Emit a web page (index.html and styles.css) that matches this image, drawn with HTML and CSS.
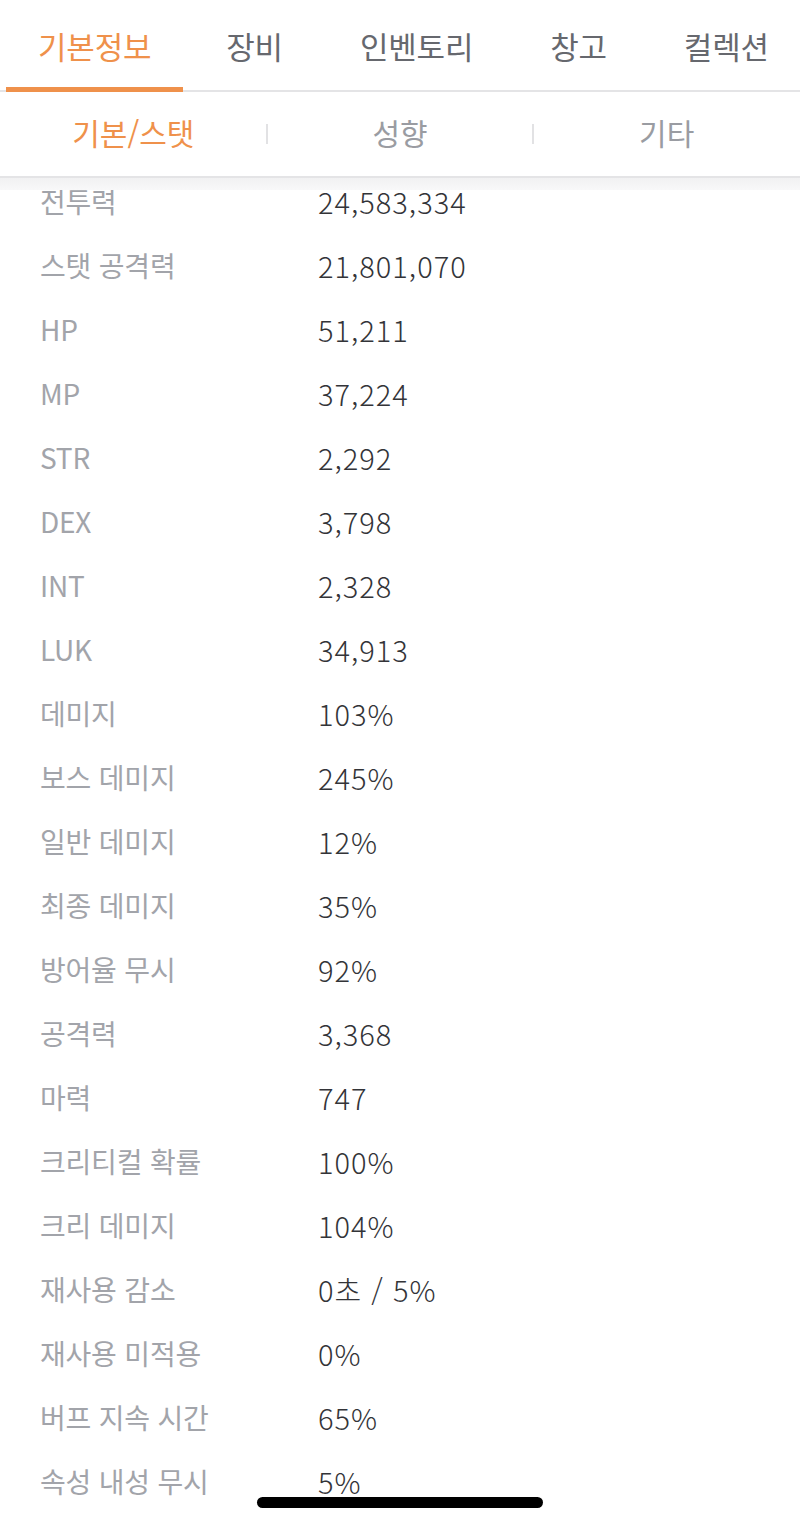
FILE: index.html
```html
<!DOCTYPE html>
<html lang="ko">
<head>
<meta charset="utf-8">
<link rel="stylesheet" href="styles.css">
</head>
<body>
<div class="screen">
  <header class="header">
    <nav class="tabs">
      <div class="tab active">기본정보</div>
      <div class="tab">장비</div>
      <div class="tab">인벤토리</div>
      <div class="tab">창고</div>
      <div class="tab">컬렉션</div>
    </nav>
    <nav class="subtabs">
      <div class="subtab active">기본/스탯</div>
      <div class="subtab">성향</div>
      <div class="subtab">기타</div>
    </nav>
  </header>
  <main class="list">
    <div class="row"><span class="label">전투력</span><span class="value">24,583,334</span></div>
    <div class="row"><span class="label">스탯 공격력</span><span class="value">21,801,070</span></div>
    <div class="row"><span class="label">HP</span><span class="value">51,211</span></div>
    <div class="row"><span class="label">MP</span><span class="value">37,224</span></div>
    <div class="row"><span class="label">STR</span><span class="value">2,292</span></div>
    <div class="row"><span class="label">DEX</span><span class="value">3,798</span></div>
    <div class="row"><span class="label">INT</span><span class="value">2,328</span></div>
    <div class="row"><span class="label">LUK</span><span class="value">34,913</span></div>
    <div class="row"><span class="label">데미지</span><span class="value">103%</span></div>
    <div class="row"><span class="label">보스 데미지</span><span class="value">245%</span></div>
    <div class="row"><span class="label">일반 데미지</span><span class="value">12%</span></div>
    <div class="row"><span class="label">최종 데미지</span><span class="value">35%</span></div>
    <div class="row"><span class="label">방어율 무시</span><span class="value">92%</span></div>
    <div class="row"><span class="label">공격력</span><span class="value">3,368</span></div>
    <div class="row"><span class="label">마력</span><span class="value">747</span></div>
    <div class="row"><span class="label">크리티컬 확률</span><span class="value">100%</span></div>
    <div class="row"><span class="label">크리 데미지</span><span class="value">104%</span></div>
    <div class="row"><span class="label">재사용 감소</span><span class="value">0초 / 5%</span></div>
    <div class="row"><span class="label">재사용 미적용</span><span class="value">0%</span></div>
    <div class="row"><span class="label">버프 지속 시간</span><span class="value">65%</span></div>
    <div class="row"><span class="label">속성 내성 무시</span><span class="value">5%</span></div>
  </main>
  <div class="home-indicator"></div>
</div>
</body>
</html>
```
FILE: styles.css
```css
* { box-sizing: border-box; }
html, body {
  margin: 0;
  padding: 0;
  background: #ffffff;
}
body {
  font-family: "Noto Sans CJK KR", "Noto Sans", sans-serif;
  width: 800px;
  height: 1518px;
  overflow: hidden;
}
.screen {
  position: relative;
  width: 800px;
  height: 1518px;
  overflow: hidden;
}
.header {
  position: relative;
  z-index: 2;
  background: #ffffff;
}
.tabs {
  display: flex;
  gap: 13px;
  padding-left: 6px;
  height: 92px;
  border-bottom: 2px solid #e4e4e6;
  white-space: nowrap;
}
.tab {
  display: flex;
  align-items: center;
  justify-content: center;
  padding: 4px 32px 0;
  font-size: 31px;
  color: #66686e;
  margin-bottom: -2px;
  border-bottom: 5px solid transparent;
  letter-spacing: -0.2px;
}
.tab:nth-child(2) { margin-left: -2px; }
.tab.active {
  color: #ef914b;
  border-bottom-color: #ef914b;
}
.subtabs {
  display: grid;
  grid-template-columns: repeat(3, 1fr);
  height: 86px;
  border-bottom: 2px solid #e4e4e6;
  padding-bottom: 4px;
}
.subtab {
  display: flex;
  align-items: center;
  justify-content: center;
  font-size: 30px;
  color: #9a9ca2;
  position: relative;
}
.subtab + .subtab::before {
  content: "";
  position: absolute;
  left: -1px;
  top: 32px;
  width: 2px;
  height: 20px;
  background: #e2e2e4;
}
.subtab.active { color: #ef914b; }
.header::after {
  content: "";
  display: block;
  height: 12px;
  background: linear-gradient(#f1f1f2, #f8f8f9);
}
.list {
  margin-top: -21px;
  position: relative;
  z-index: 1;
}
.row {
  display: flex;
  align-items: center;
  height: 64px;
  padding-left: 40px;
}
.label {
  width: 278px;
  flex: none;
  font-size: 28px;
  color: #a2a4aa;
  letter-spacing: -0.2px;
}
.value {
  font-size: 29px;
  font-weight: 300;
  color: #333438;
  letter-spacing: 1px;
}
.home-indicator {
  position: absolute;
  left: 257px;
  top: 1497px;
  width: 286px;
  height: 11px;
  border-radius: 6px;
  background: #000000;
  z-index: 3;
}
```
